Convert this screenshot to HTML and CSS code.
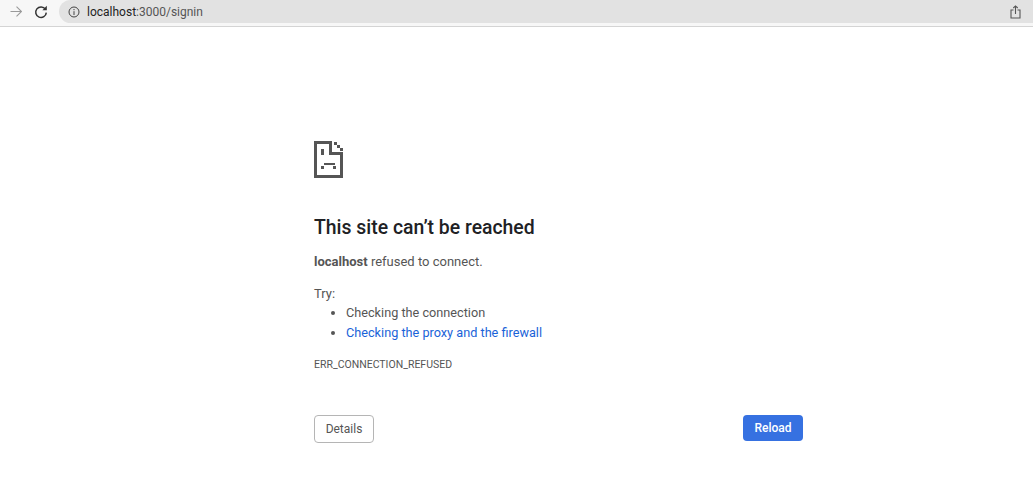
FILE: index.html
```html
<!DOCTYPE html>
<html lang="en">
<head>
    <meta charset="UTF-8">
    <title>localhost</title>
    <link rel="stylesheet" href="styles.css">
</head>
<body>

    <div class="toolbar">
        <svg class="icon-forward" width="12" height="11" viewBox="0 0 12 11" fill="none" stroke="#9a9a9a" stroke-width="1.1">
            <path d="M0.5 5.5H11.5M6.5 0.7l5 4.8-5 4.8"/>
        </svg>
        <svg class="icon-reload" width="14" height="14" viewBox="0 0 14 14" fill="none" stroke="#333" stroke-width="1.5">
            <path d="M11.4 4.2A5.3 5.3 0 1 0 12.3 7.6"/>
            <path d="M12.8 0.8V5.2H8.4z" fill="#333" stroke="none"/>
        </svg>
        <div class="address">
            <svg class="icon-info" width="12" height="12" viewBox="0 0 12 12" fill="none" stroke="#444" stroke-width="1">
                <circle cx="6" cy="6" r="5"/>
                <path d="M6 5.2V9M6 3V4.2"/>
            </svg>
            <span class="host">localhost</span><span class="path">:3000/signin</span>
            <svg class="icon-share" width="11" height="14" viewBox="0 0 11 14" fill="none" stroke="#555" stroke-width="1.1">
                <path d="M3.5 5H1V13H10V5H7.5"/>
                <path d="M5.5 9V1M3.3 3L5.5 .9 7.7 3"/>
            </svg>
        </div>
    </div>

    <div class="content">
        <svg class="sad-page" width="30" height="37" viewBox="0 0 30 37" shape-rendering="crispEdges" fill="#555">
            <path d="M0 0H18V3H3V34H26V14H29V37H0z"/>
            <path d="M15 0h3v11h11v3H15z"/>
            <path d="M20 1h3v3h-3zM23 4h3v3h-3zM26 7h3v3h-3z"/>
            <path d="M7 8h3v6H7z"/>
            <path d="M10 22h11v2H10zM7 25h3v3H7zM19 25h3v3h-3z"/>
        </svg>

        <h1>This site can’t be reached</h1>
        <p class="summary"><b>localhost</b> refused to connect.</p>
        <p class="try">Try:</p>
        <ul>
            <li>Checking the connection</li>
            <li><a href="#">Checking the proxy and the firewall</a></li>
        </ul>
        <div class="code">ERR_CONNECTION_REFUSED</div>

        <div class="buttons">
            <button class="details">Details</button>
            <button class="reload">Reload</button>
        </div>
    </div>

</body>
</html>
```

FILE: styles.css
```css
body {
    margin: 0;
    font-family: Roboto, "Liberation Sans", sans-serif;
    background-color: #fff;
    color: #555;
}
.toolbar {
    display: flex;
    align-items: center;
    height: 26px;
    border-bottom: 1px solid #d4d4d4;
    background-color: #f7f7f7;
}
.icon-forward {
    margin-left: 10px;
    margin-top: -3px;
}
.icon-reload {
    margin-left: 12px;
    margin-top: -3px;
}
.address {
    flex: 1;
    display: flex;
    align-items: center;
    height: 23px;
    margin-left: 11px;
    margin-top: -3px;
    padding-left: 9px;
    padding-right: 12px;
    border-radius: 12px 0 0 12px;
    background-color: #e2e2e2;
    font-size: 12px;
}
.icon-info {
    margin-right: 7px;
}
.host {
    color: #222;
}
.path {
    color: #555;
}
.icon-share {
    margin-left: auto;
}
.content {
    width: 489px;
    margin-left: 314px;
    padding-top: 114px;
}
.sad-page {
    display: block;
}
h1 {
    margin: 37px 0 0;
    font-size: 19.4px;
    line-height: 26px;
    font-weight: 500;
    color: #202124;
}
.summary {
    margin: 11px 0 0;
    font-size: 13px;
    line-height: 20px;
}
.try {
    margin: 12px 0 0;
    font-size: 13px;
    line-height: 20px;
}
ul {
    margin: -1px 0 0;
    padding-left: 32px;
    font-size: 12.7px;
    line-height: 19.5px;
}
a {
    color: #1a63d8;
    text-decoration: none;
}
.code {
    margin-top: 15px;
    font-size: 10.5px;
    line-height: 16px;
}
.buttons {
    display: flex;
    justify-content: space-between;
    align-items: flex-start;
    margin-top: 42px;
}
button {
    font-family: Roboto, "Liberation Sans", sans-serif;
    font-size: 12px;
    border-radius: 4px;
    width: 60px;
}
.details {
    height: 28px;
    background-color: #fff;
    border: 1px solid #b5b5b5;
    color: #555;
}
.reload {
    height: 26px;
    background-color: #3671e1;
    border: none;
    color: #fff;
    font-weight: 500;
}
```
